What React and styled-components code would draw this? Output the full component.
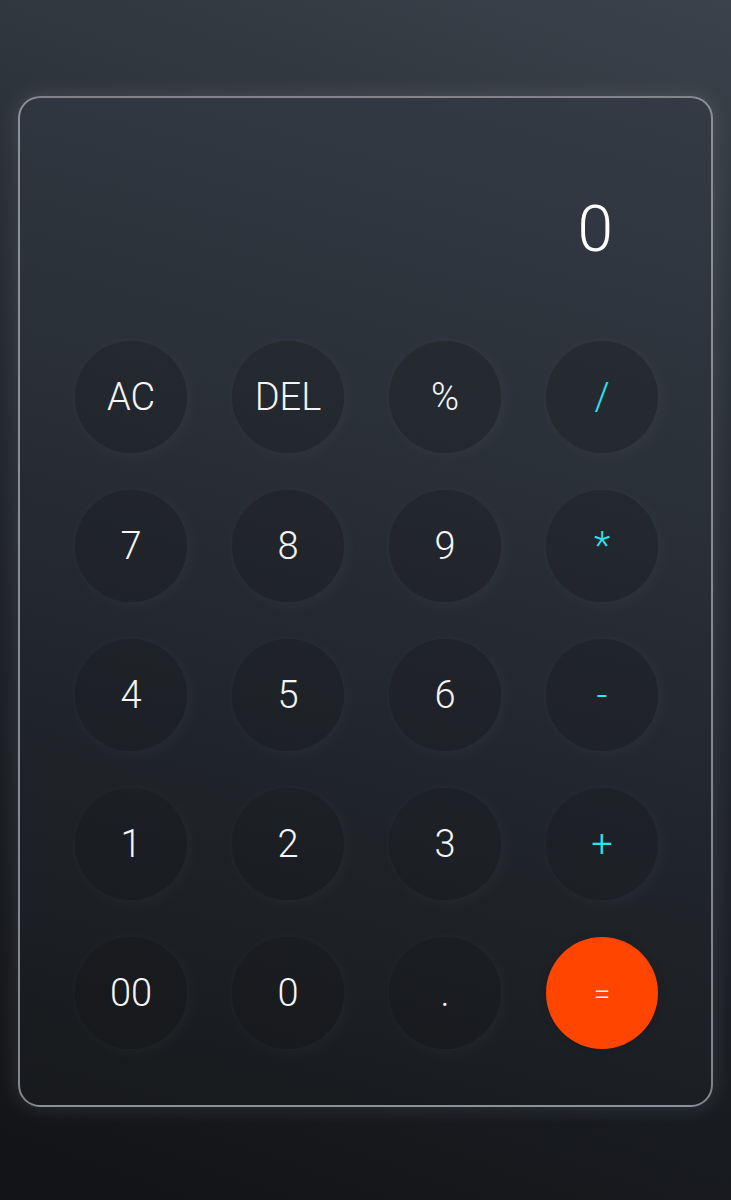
import React from "react";
import styled, { createGlobalStyle } from "styled-components";

// Calculator screen: dark glass card with soft round keys.

const GlobalStyle = createGlobalStyle`
  html, body {
    margin: 0;
    padding: 0;
    min-height: 100%;
  }
  body {
    background: linear-gradient(200deg, #3b424b 0%, #2a3038 30%, #1b1e23 70%, #121316 100%);
    min-height: 1200px;
    font-family: Roboto, "Liberation Sans", sans-serif;
  }
`;

const Page = styled.div`
  min-height: 1200px;
  padding: 96px 18px 0;
  box-sizing: border-box;
`;

const Card = styled.div`
  box-sizing: border-box;
  width: 695px;
  border: 2px solid rgba(200, 205, 212, 0.6);
  border-radius: 22px;
  background: linear-gradient(195deg, #343b45 0%, #2a3038 35%, #1f2328 70%, #17191c 100%);
  box-shadow: 0 0 22px rgba(255, 255, 255, 0.12);
  padding: 0 55px 56px;
  display: flex;
  flex-direction: column;
`;

const Display = styled.div`
  height: 243px;
  padding: 20px 43px 0 0;
  box-sizing: border-box;
  display: flex;
  align-items: center;
  justify-content: flex-end;
  color: #ffffff;
  font-size: 64px;
  font-weight: 300;
`;

const Keys = styled.div`
  display: grid;
  grid-template-columns: repeat(4, 112px);
  grid-auto-rows: 112px;
  column-gap: 45px;
  row-gap: 37px;
`;

const Key = styled.button`
  width: 112px;
  height: 112px;
  border-radius: 50%;
  border: none;
  padding: 0;
  font-family: Roboto, "Liberation Sans", sans-serif;
  font-weight: 300;
  font-size: ${({ $small }) => ($small ? "30px" : "38px")};
  color: ${({ $kind }) => ($kind === "op" ? "#27e6ef" : "#f4f5f6")};
  background: ${({ $kind }) =>
    $kind === "eq" ? "#ff4500" : "rgba(20, 22, 26, 0.28)"};
  box-shadow: ${({ $kind }) =>
    $kind === "eq"
      ? "0 0 10px rgba(0, 0, 0, 0.12)"
      : "4px 4px 18px rgba(255, 255, 255, 0.035), -2px -2px 12px rgba(255, 255, 255, 0.02)"};
  display: flex;
  align-items: center;
  justify-content: center;
  cursor: pointer;
`;

const keys = [
  ["AC"], ["DEL"], ["%"], ["/", "op"],
  ["7"], ["8"], ["9"], ["*", "op"],
  ["4"], ["5"], ["6"], ["-", "op"],
  ["1"], ["2"], ["3"], ["+", "op"],
  ["00"], ["0"], ["."], ["=", "eq"],
];

const App = () => {
  return (
    <Page>
      <GlobalStyle />
      <Card>
        <Display>0</Display>
        <Keys>
          {keys.map(([label, kind]) => (
            <Key key={label} $kind={kind} $small={kind === "eq"}>
              {label}
            </Key>
          ))}
        </Keys>
      </Card>
    </Page>
  );
};

export default App;
